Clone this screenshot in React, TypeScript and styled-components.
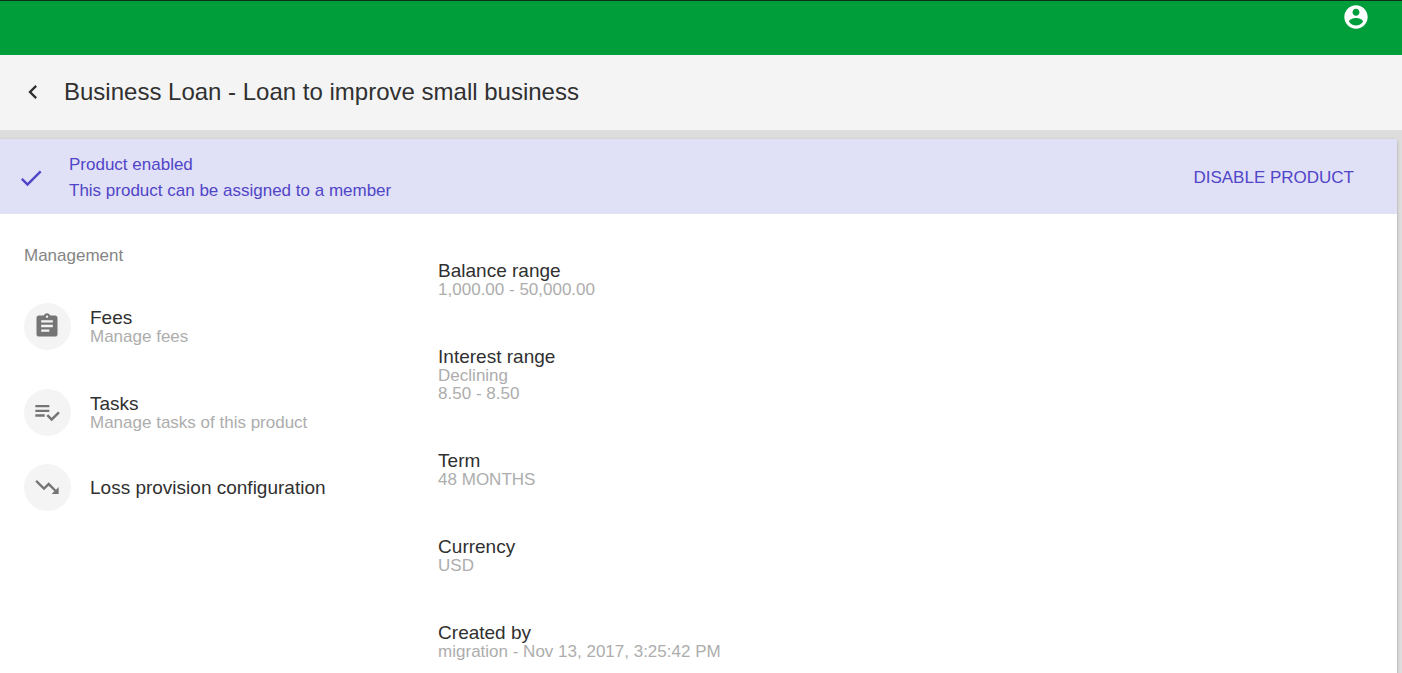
import React from "react";
import styled, { createGlobalStyle } from "styled-components";

const GlobalStyle = createGlobalStyle`
  * { box-sizing: border-box; }
  html, body, #root { height: 100%; }
  body {
    margin: 0;
    background: #dddddd;
    color: #303030;
    font-family: "Liberation Sans", Arial, sans-serif;
    font-size: 17px;
  }
`;

const Page = styled.div`
  min-height: 100%;
  display: flex;
  flex-direction: column;
`;

const AppBar = styled.header`
  display: flex;
  justify-content: flex-end;
  align-items: flex-start;
  height: 55px;
  padding: 2px 32px 0 0;
  border-top: 1px solid #10301c;
  background: #009e3b;
`;

const IconButton = styled.button`
  display: flex;
  padding: 0;
  border: 0;
  background: none;
  color: inherit;
  cursor: pointer;
`;

const AccountButton = styled(IconButton)`
  color: #ffffff;
`;

const TitleBar = styled.div`
  display: flex;
  align-items: center;
  gap: 17px;
  height: 75px;
  padding: 0 19px 2px;
  background: #f4f4f4;
`;

const Title = styled.h1`
  margin: 0;
  font-size: 24px;
  line-height: 28px;
  font-weight: 400;
`;

const Card = styled.main`
  flex: 1;
  margin: 9px 5px 0 0;
  border-top-right-radius: 3px;
  background: #ffffff;
  box-shadow: 0 1px 3px rgba(0, 0, 0, 0.3);
`;

const Banner = styled.section`
  display: flex;
  align-items: center;
  gap: 24px;
  height: 75px;
  padding: 2px 43px 0 17px;
  border-top-right-radius: 3px;
  background: #e0e0f6;
  color: #5045c8;
`;

const BannerText = styled.div`
  flex: 1;
  line-height: 26px;
`;

const TextButton = styled.button`
  padding: 0;
  border: 0;
  background: none;
  color: inherit;
  font: inherit;
  line-height: 20px;
  text-transform: uppercase;
  cursor: pointer;
`;

const Columns = styled.div`
  display: grid;
  grid-template-columns: 30% 1fr;
  padding-top: 20px;
`;

const Navigation = styled.nav`
  padding-left: 24px;
`;

const SubHeader = styled.h2`
  margin: 0;
  padding: 12px 0 17px;
  color: #858585;
  font-size: 17px;
  line-height: 20px;
  font-weight: 400;
`;

const List = styled.ul`
  margin: 0;
  padding: 0;
  list-style: none;
`;

const NavLink = styled.a<{ $compact?: boolean }>`
  display: flex;
  align-items: center;
  gap: 19px;
  height: ${(p) => (p.$compact ? 64 : 86)}px;
  color: inherit;
  text-decoration: none;
`;

const Avatar = styled.span`
  display: flex;
  width: 47px;
  height: 47px;
  padding: 9px 0 0 9px;
  border-radius: 50%;
  background: #f4f4f4;
  color: #757575;
`;

const LinkText = styled.div`
  padding-top: 2px;
`;

const Primary = styled.div`
  font-size: 19px;
  line-height: 20px;
`;

const Secondary = styled.div`
  margin: 0;
  color: #adadad;
  font-size: 17px;
  line-height: 18px;
`;

const Details = styled.dl`
  margin: 0;
  padding: 3px 19px 0;
`;

const Detail = styled.div`
  padding: 24px 0;
`;

const Icon = ({ path }: { path: string }) => (
  <svg width="28" height="28" viewBox="0 0 24 24" fill="currentColor" aria-hidden="true">
    <path d={path} />
  </svg>
);

const icons = {
  account:
    "M12 2C6.48 2 2 6.48 2 12s4.48 10 10 10 10-4.48 10-10S17.52 2 12 2zm0 3c1.66 0 3 1.34 3 3s-1.34 3-3 3-3-1.34-3-3 1.34-3 3-3zm0 14.2c-2.5 0-4.71-1.28-6-3.22.03-1.99 4-3.08 6-3.08 1.99 0 5.97 1.09 6 3.08-1.29 1.94-3.5 3.22-6 3.22z",
  back: "M15.41 7.41L14 6l-6 6 6 6 1.41-1.41L10.83 12z",
  check: "M9 16.17L4.83 12l-1.42 1.41L9 19 21 7l-1.41-1.41z",
  clipboard:
    "M19 3h-4.18C14.4 1.84 13.3 1 12 1c-1.3 0-2.4.84-2.82 2H5c-1.1 0-2 .9-2 2v14c0 1.1.9 2 2 2h14c1.1 0 2-.9 2-2V5c0-1.1-.9-2-2-2zm-7 0c.55 0 1 .45 1 1s-.45 1-1 1-1-.45-1-1 .45-1 1-1zm2 14H7v-2h7v2zm3-4H7v-2h10v2zm0-4H7V7h10v2z",
  tasks:
    "M14 10H2v2h12v-2zm0-4H2v2h12V6zM2 16h8v-2H2v2zm19.5-4.5L23 13l-6.99 7-4.51-4.5L13 14l3.01 3 5.49-5.5z",
  trendingDown: "M16 18l2.29-2.29-4.88-4.88-4 4L2 7.41 3.41 6l6 6 4-4 6.3 6.29L22 12v6z",
};

const links = [
  { label: "Fees", note: "Manage fees", icon: icons.clipboard },
  { label: "Tasks", note: "Manage tasks of this product", icon: icons.tasks },
  { label: "Loss provision configuration", icon: icons.trendingDown },
];

const details = [
  { label: "Balance range", values: ["1,000.00 - 50,000.00"] },
  { label: "Interest range", values: ["Declining", "8.50 - 8.50"] },
  { label: "Term", values: ["48 MONTHS"] },
  { label: "Currency", values: ["USD"] },
  { label: "Created by", values: ["migration - Nov 13, 2017, 3:25:42 PM"] },
];

export default function App() {
  return (
    <Page>
      <GlobalStyle />
      <AppBar>
        <AccountButton type="button" aria-label="Account">
          <Icon path={icons.account} />
        </AccountButton>
      </AppBar>
      <TitleBar>
        <IconButton type="button" aria-label="Back">
          <Icon path={icons.back} />
        </IconButton>
        <Title>Business Loan - Loan to improve small business</Title>
      </TitleBar>
      <Card>
        <Banner>
          <Icon path={icons.check} />
          <BannerText>
            <div>Product enabled</div>
            <div>This product can be assigned to a member</div>
          </BannerText>
          <TextButton type="button">Disable product</TextButton>
        </Banner>
        <Columns>
          <Navigation aria-label="Management">
            <SubHeader>Management</SubHeader>
            <List>
              {links.map((link) => (
                <li key={link.label}>
                  <NavLink href="#" $compact={!link.note}>
                    <Avatar>
                      <Icon path={link.icon} />
                    </Avatar>
                    <LinkText>
                      <Primary>{link.label}</Primary>
                      {link.note && <Secondary>{link.note}</Secondary>}
                    </LinkText>
                  </NavLink>
                </li>
              ))}
            </List>
          </Navigation>
          <Details>
            {details.map((detail) => (
              <Detail key={detail.label}>
                <Primary as="dt">{detail.label}</Primary>
                {detail.values.map((value) => (
                  <Secondary as="dd" key={value}>
                    {value}
                  </Secondary>
                ))}
              </Detail>
            ))}
          </Details>
        </Columns>
      </Card>
    </Page>
  );
}
